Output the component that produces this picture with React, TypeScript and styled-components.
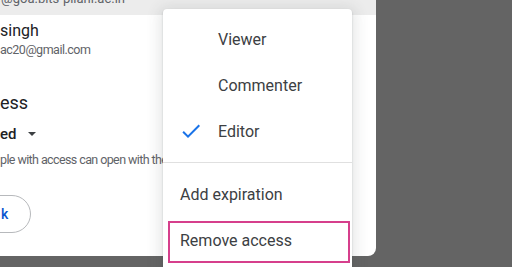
import React from "react";
import styled, { createGlobalStyle } from "styled-components";

const GlobalStyle = createGlobalStyle`
  html, body {
    margin: 0;
    padding: 0;
    background: #646464;
    font-family: Roboto, "Liberation Sans", Arial, sans-serif;
  }
`;

const Stage = styled.div`
  position: relative;
  width: 512px;
  height: 267px;
  overflow: hidden;
  background: #646464;
`;

const Dialog = styled.div`
  width: 376px;
  height: 256px;
  background: #fff;
  border-bottom-right-radius: 8px;
  overflow: hidden;
  display: flex;
  flex-direction: column;
`;

const TopStrip = styled.div`
  height: 15px;
  flex-shrink: 0;
  background: #ececec;
  overflow: hidden;
`;

const StripText = styled.div`
  margin-top: -9px;
  padding-left: 1px;
  font-size: 13px;
  line-height: 16px;
  color: #5f6368;
  white-space: nowrap;
`;

const Body = styled.div`
  display: flex;
  flex-direction: column;
  align-items: flex-start;
  padding-top: 6px;
`;

const Name = styled.div`
  font-size: 16px;
  line-height: 20px;
  color: #202124;
`;

const Email = styled.div`
  font-size: 12.5px;
  letter-spacing: -0.5px;
  line-height: 18px;
  color: #5f6368;
`;

const Heading = styled.div`
  margin-top: 32px;
  font-size: 18px;
  line-height: 24px;
  color: #202124;
`;

const Select = styled.div`
  display: flex;
  align-items: center;
  gap: 11px;
  margin-top: 9px;
  font-size: 15px;
  line-height: 20px;
  font-weight: 500;
  color: #202124;
`;

const Hint = styled.div`
  margin-top: 7px;
  font-size: 12.5px;
  letter-spacing: -0.6px;
  line-height: 18px;
  color: #5f6368;
  white-space: nowrap;
`;

const PillButton = styled.button`
  margin-top: 26px;
  margin-left: -30px;
  height: 38px;
  padding: 0 22px 0 30px;
  border: 1px solid #b7b9bc;
  border-radius: 19px;
  background: #fff;
  font-family: inherit;
  font-size: 14px;
  font-weight: 500;
  color: #0b57d0;
`;

const Menu = styled.div`
  position: absolute;
  left: 163px;
  top: 9px;
  width: 189px;
  bottom: -12px;
  background: #fff;
  border-radius: 4px;
  padding-top: 7px;
  box-shadow: 0 2px 14px 4px rgba(60, 64, 67, 0.12),
    0 1px 2px rgba(60, 64, 67, 0.25);
`;

const Item = styled.div<{ $marked?: boolean; $indent?: number }>`
  box-sizing: border-box;
  display: flex;
  align-items: center;
  gap: 15px;
  height: ${(p) => (p.$marked ? "42px" : "46px")};
  margin: ${(p) => (p.$marked ? "4px 2px 0 5px" : "0")};
  padding-left: ${(p) => p.$indent ?? 16}px;
  padding-bottom: ${(p) => (p.$marked ? "3px" : "0")};
  border: ${(p) => (p.$marked ? "2px solid #d63f8c" : "none")};
  font-size: 16px;
  color: #3c4043;
  white-space: nowrap;
`;

const IconSlot = styled.span`
  width: 24px;
  height: 24px;
  display: flex;
  color: #1a73e8;
`;

const Divider = styled.div`
  height: 1px;
  margin: 8px 0;
  background: #e0e0e0;
`;

const Check = () => (
  <svg width="24" height="24" viewBox="0 0 24 24" fill="currentColor">
    <path d="M9 16.17 4.83 12l-1.42 1.41L9 19 21 7l-1.41-1.41z" />
  </svg>
);

const ArrowDrop = () => (
  <svg width="8" height="4" viewBox="0 0 8 4" fill="#3c4043">
    <path d="M0 0l4 4 4-4z" />
  </svg>
);

const roles = ["Viewer", "Commenter", "Editor"];
const current = "Editor";

export default function App() {
  return (
    <>
      <GlobalStyle />
      <Stage>
        <Dialog>
          <TopStrip>
            <StripText>@goa.bits-pilani.ac.in</StripText>
          </TopStrip>
          <Body>
            <Name>singh</Name>
            <Email>ac20@gmail.com</Email>
            <Heading>ess</Heading>
            <Select>
              ed <ArrowDrop />
            </Select>
            <Hint>ple with access can open with the link</Hint>
            <PillButton>k</PillButton>
          </Body>
        </Dialog>
        <Menu>
          {roles.map((r) => (
            <Item key={r}>
              <IconSlot>{r === current && <Check />}</IconSlot>
              {r}
            </Item>
          ))}
          <Divider />
          <Item $indent={17}>Add expiration</Item>
          <Item $marked $indent={10}>
            Remove access
          </Item>
        </Menu>
      </Stage>
    </>
  );
}
